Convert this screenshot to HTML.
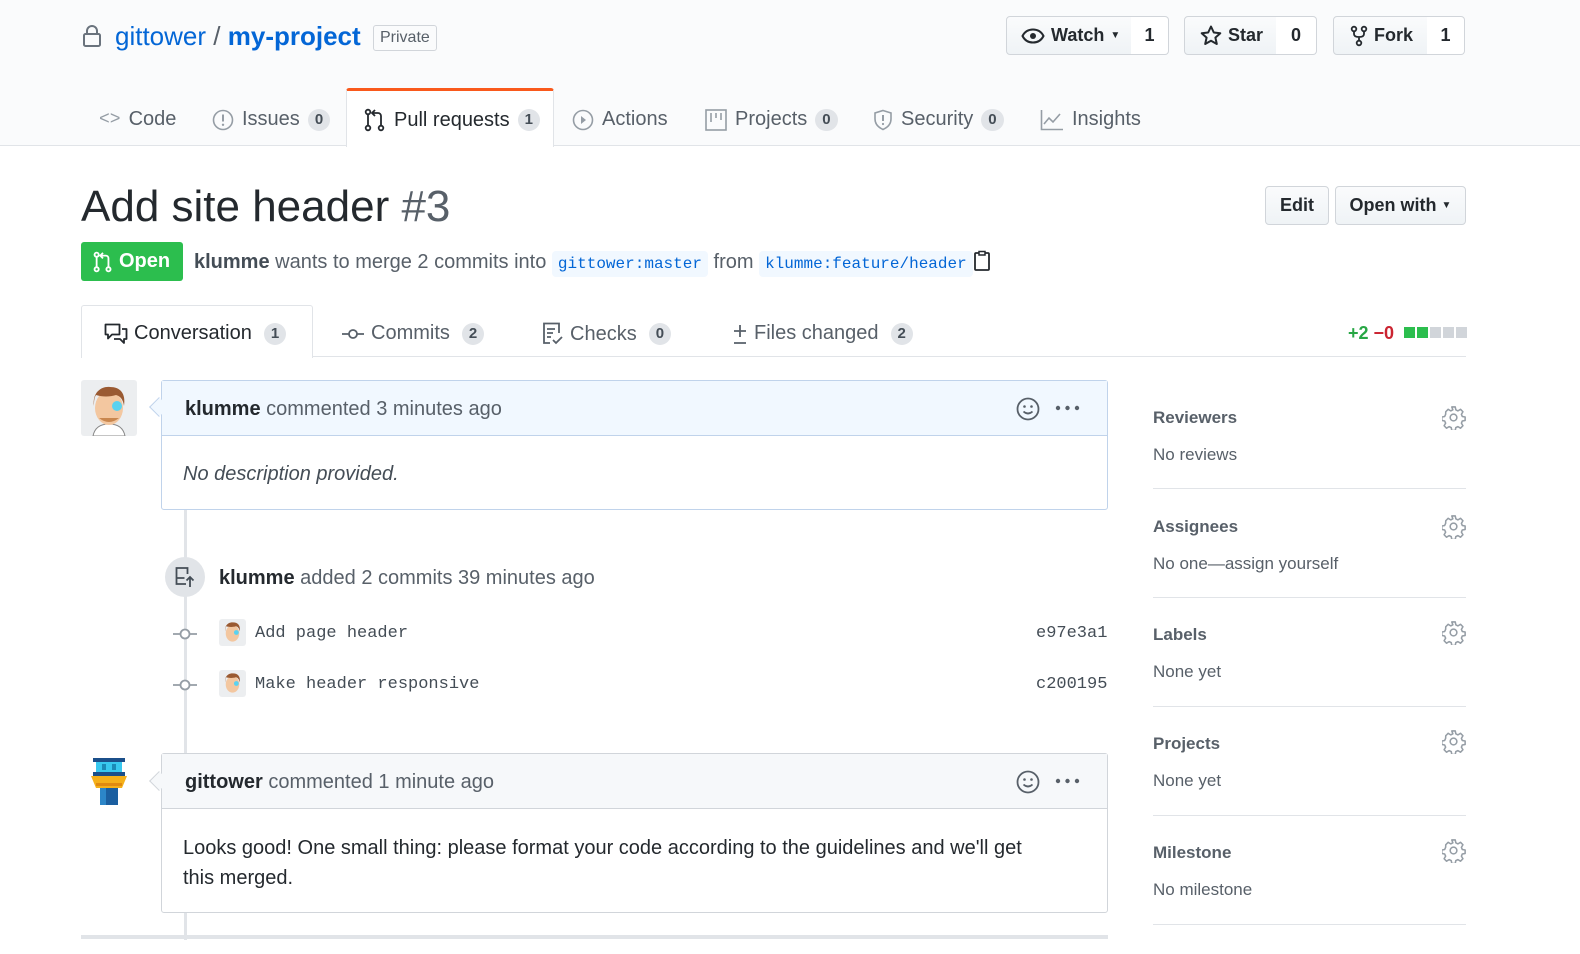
<!DOCTYPE html>
<html><head><meta charset="utf-8"><style>
*{box-sizing:border-box;margin:0;padding:0}
body{width:1580px;height:954px;overflow:hidden;background:#fff;font-family:"Liberation Sans",Helvetica,Arial,sans-serif;color:#24292e;position:relative}
.a{position:absolute;white-space:nowrap}
.hdr{position:absolute;left:0;top:0;width:1580px;height:146px;background:#fafbfc;border-bottom:1px solid #e1e4e8}
.btn{position:absolute;height:39px;border:1px solid #d1d5da;border-radius:4px;background:linear-gradient(#fafbfc,#eff3f6);font-weight:bold;font-size:18px;display:flex;align-items:center}
.cnt{position:absolute;height:39px;border:1px solid #d1d5da;border-left:none;border-radius:0 4px 4px 0;background:#fff;font-weight:bold;font-size:18px;display:flex;align-items:center;justify-content:center}
.tab{position:absolute;top:108px;font-size:20px;color:#586069;display:flex;align-items:center;gap:8px}
.badge{display:inline-block;background:#e1e4e8;border-radius:12px;font-size:15px;font-weight:bold;color:#444d56;padding:2px 7px;line-height:18px}
.code{font-family:"Liberation Mono",monospace;font-size:16px;color:#0366d6;background:#f1f8ff;padding:4px 6px;border-radius:4px}
.sh{font-size:17px;font-weight:bold;color:#586069}
.sv{font-size:17px;color:#586069}
.sep{position:absolute;left:1153px;width:313px;height:1px;background:#e1e4e8}
.mono{font-family:"Liberation Mono",monospace;font-size:17px;color:#444d56}
</style></head><body>
<div class="hdr"></div>
<svg class="a" style="left:82px;top:24px" width="20" height="24" viewBox="0 0 20 24"><rect x="2" y="10" width="16" height="12" rx="1.5" fill="none" stroke="#6a737d" stroke-width="2"/><path d="M5 10V7a5 5 0 0 1 10 0v3" fill="none" stroke="#6a737d" stroke-width="2"/></svg>
<div class="a" style="left:115px;top:21px;font-size:26px;color:#0366d6">gittower <span style="color:#586069">/</span> <b>my-project</b></div>
<div class="a" style="left:373px;top:25px;border:1px solid #d1d5da;border-radius:3px;font-size:16px;color:#586069;padding:3px 6px;background:#fafbfc">Private</div>
<div class="btn" style="left:1006px;top:16px;width:126px;border-radius:4px 0 0 4px;padding-left:14px;gap:6px"><svg width="24" height="16" viewBox="0 0 24 16"><path d="M1.5 8C4 3 8 1.5 12 1.5S20 3 22.5 8C20 13 16 14.5 12 14.5S4 13 1.5 8Z" fill="none" stroke="#24292e" stroke-width="2"/><circle cx="12" cy="8" r="3" fill="#24292e"/></svg>Watch <span style="font-size:10px">▼</span></div>
<div class="cnt" style="left:1131px;top:16px;width:38px">1</div>
<div class="btn" style="left:1184px;top:16px;width:93px;border-radius:4px 0 0 4px;padding-left:15px;gap:6px"><svg width="22" height="21" viewBox="0 0 22 21"><path d="M11 1.5l2.8 6 6.5.7-4.9 4.4 1.4 6.4L11 15.7 5.2 19l1.4-6.4L1.7 8.2l6.5-.7z" fill="none" stroke="#24292e" stroke-width="2" stroke-linejoin="round"/></svg>Star</div>
<div class="cnt" style="left:1276px;top:16px;width:41px">0</div>
<div class="btn" style="left:1333px;top:16px;width:95px;border-radius:4px 0 0 4px;padding-left:16px;gap:6px"><svg width="18" height="22" viewBox="0 0 18 22"><circle cx="4" cy="4" r="2.3" fill="none" stroke="#24292e" stroke-width="1.8"/><circle cx="14" cy="4" r="2.3" fill="none" stroke="#24292e" stroke-width="1.8"/><circle cx="9" cy="18" r="2.3" fill="none" stroke="#24292e" stroke-width="1.8"/><path d="M4 6.5v2.5c0 2 2 3 5 3s5-1 5-3V6.5M9 12v3.5" fill="none" stroke="#24292e" stroke-width="1.8"/></svg>Fork</div>
<div class="cnt" style="left:1427px;top:16px;width:38px">1</div>
<div class="a" style="left:346px;top:88px;width:208px;height:59px;background:#fff;border:1px solid #e1e4e8;border-bottom:none;border-top:3px solid #f9591c;border-radius:3px 3px 0 0"></div>
<div class="tab" style="left:99px"><span style="font-family:'Liberation Mono',monospace;color:#959da5;font-size:18px">&lt;&gt;</span>Code</div>
<div class="tab" style="left:212px"><svg width="22" height="22" viewBox="0 0 22 22"><circle cx="11" cy="11" r="9.5" fill="none" stroke="#959da5" stroke-width="1.6"/><path d="M11 5.5v7" stroke="#959da5" stroke-width="2"/><circle cx="11" cy="15.8" r="1.2" fill="#959da5"/></svg>Issues <span class="badge">0</span></div>
<div class="tab" style="left:364px;color:#24292e"><svg width="22" height="24" viewBox="0 0 22 24"><circle cx="4" cy="4" r="2.3" fill="none" stroke="#24292e" stroke-width="1.8"/><circle cx="4" cy="20" r="2.3" fill="none" stroke="#24292e" stroke-width="1.8"/><circle cx="17" cy="20" r="2.3" fill="none" stroke="#24292e" stroke-width="1.8"/><path d="M4 6.3v11.4M17 17.7V8a3 3 0 0 0-3-3H9M11 2 8 5l3 3" fill="none" stroke="#24292e" stroke-width="1.8"/></svg>Pull requests <span class="badge">1</span></div>
<div class="tab" style="left:572px"><svg width="22" height="22" viewBox="0 0 22 22"><circle cx="11" cy="11" r="9.5" fill="none" stroke="#959da5" stroke-width="1.6"/><path d="M9 7l5 4-5 4z" fill="#959da5"/></svg>Actions</div>
<div class="tab" style="left:705px"><svg width="22" height="22" viewBox="0 0 22 22"><rect x="1" y="1" width="20" height="20" fill="none" stroke="#959da5" stroke-width="1.6"/><path d="M6 4v9M11 4v5M16 4v7" stroke="#959da5" stroke-width="1.6"/></svg>Projects <span class="badge">0</span></div>
<div class="tab" style="left:873px"><svg width="20" height="22" viewBox="0 0 20 22"><path d="M10 1.5 18 4v6c0 5-3.5 8.5-8 10.5C5.5 18.5 2 15 2 10V4z" fill="none" stroke="#959da5" stroke-width="1.6"/><path d="M10 6v6" stroke="#959da5" stroke-width="2"/><circle cx="10" cy="15" r="1.1" fill="#959da5"/></svg>Security <span class="badge">0</span></div>
<div class="tab" style="left:1040px"><svg width="24" height="22" viewBox="0 0 24 22"><path d="M1.5 1v19.5H23M4 15l5-6 4 4 7-8" fill="none" stroke="#959da5" stroke-width="1.6"/></svg>Insights</div>
<div class="a" style="left:81px;top:182px;font-size:44px;color:#24292e">Add site header <span style="color:#586069">#3</span></div>
<div class="btn" style="left:1265px;top:186px;width:64px;justify-content:center">Edit</div>
<div class="btn" style="left:1335px;top:186px;width:131px;justify-content:center;gap:5px">Open with <span style="font-size:10px">▼</span></div>
<div class="a" style="left:81px;top:242px;width:102px;height:39px;background:#2cbe4e;border-radius:3px;color:#fff;font-weight:bold;font-size:20px;display:flex;align-items:center;gap:6px;padding-left:12px"><svg width="20" height="22" viewBox="0 0 22 24"><circle cx="4" cy="4" r="2.3" fill="none" stroke="#fff" stroke-width="2"/><circle cx="4" cy="20" r="2.3" fill="none" stroke="#fff" stroke-width="2"/><circle cx="17" cy="20" r="2.3" fill="none" stroke="#fff" stroke-width="2"/><path d="M4 6.3v11.4M17 17.7V8a3 3 0 0 0-3-3H9M11 2 8 5l3 3" fill="none" stroke="#fff" stroke-width="2"/></svg>Open</div>
<div class="a" style="left:194px;top:251px;font-size:20px;color:#586069"><b style="color:#444d56">klumme</b> wants to merge 2 commits into <span class="code">gittower:master</span> from <span class="code">klumme:feature/header</span></div>
<svg class="a" style="left:973px;top:250px" width="18" height="22" viewBox="0 0 18 22"><rect x="2" y="3" width="14" height="17" rx="1" fill="none" stroke="#24292e" stroke-width="1.8"/><rect x="6" y="1.5" width="6" height="3.5" fill="#fff" stroke="#24292e" stroke-width="1.5"/></svg>
<div class="a" style="left:81px;top:356px;width:1385px;height:1px;background:#e1e4e8"></div>
<div class="a" style="left:81px;top:305px;width:232px;height:53px;background:#fff;border:1px solid #e1e4e8;border-bottom:none;border-radius:3px 3px 0 0"></div>
<div class="a" style="left:104px;top:322px;font-size:20px;color:#24292e;display:flex;align-items:center;gap:6px"><svg width="24" height="22" viewBox="0 0 24 22"><path d="M1.5 1.5h14v10H8l-4 4v-4H1.5z" fill="none" stroke="#24292e" stroke-width="1.8" stroke-linejoin="round"/><path d="M18 6h4.5v10h-2.5v4l-4-4h-6" fill="none" stroke="#24292e" stroke-width="1.8" stroke-linejoin="round"/></svg>Conversation <span class="badge" style="margin-left:6px">1</span></div>
<div class="a" style="left:341px;top:322px;font-size:20px;color:#586069;display:flex;align-items:center;gap:6px"><svg width="24" height="14" viewBox="0 0 24 14"><circle cx="12" cy="7" r="4" fill="none" stroke="#586069" stroke-width="1.8"/><path d="M1 7h7M16 7h7" stroke="#586069" stroke-width="1.8"/></svg>Commits <span class="badge" style="margin-left:6px">2</span></div>
<div class="a" style="left:542px;top:322px;font-size:20px;color:#586069;display:flex;align-items:center;gap:6px"><svg width="22" height="24" viewBox="0 0 22 24"><path d="M8 21H2V1.5h15V11" fill="none" stroke="#586069" stroke-width="1.8"/><path d="M5 7h8M5 11h6M5 15h4M11 18l3 3 6-6" fill="none" stroke="#586069" stroke-width="1.8"/></svg>Checks <span class="badge" style="margin-left:6px">0</span></div>
<div class="a" style="left:732px;top:322px;font-size:20px;color:#586069;display:flex;align-items:center;gap:6px"><svg width="16" height="22" viewBox="0 0 16 22"><path d="M8 2v12M2 8h12M2 20h12" stroke="#586069" stroke-width="1.8"/></svg>Files changed <span class="badge" style="margin-left:6px">2</span></div>
<div class="a" style="left:1348px;top:323px;font-size:18px;font-weight:bold"><span style="color:#28a745">+2</span> <span style="color:#cb2431">−0</span></div>
<div class="a" style="left:1404px;top:327px;display:flex;gap:2px"><i style="width:11px;height:11px;background:#2cbe4e"></i><i style="width:11px;height:11px;background:#2cbe4e"></i><i style="width:11px;height:11px;background:#d1d5da"></i><i style="width:11px;height:11px;background:#d1d5da"></i><i style="width:11px;height:11px;background:#d1d5da"></i></div>
<div class="a" style="left:184px;top:509px;width:3px;height:431px;background:#e1e4e8"></div>
<div class="a" style="left:81px;top:380px;width:56px;height:56px;background:#eceef0;border-radius:3px;overflow:hidden"><svg width="56" height="56" viewBox="0 0 56 56"><path d="M12 56c2-10 10-12 16-12s14 2 16 12z" fill="#fff" stroke="#888"/><ellipse cx="28" cy="28" rx="14" ry="17" fill="#f3c7a0"/><path d="M13 26c-2-14 8-20 16-19 10 0 16 6 14 19-1-7-4-10-8-11-6 2-14 2-20 0-2 3-2 7-2 11z" fill="#9a5a32"/><circle cx="36" cy="26" r="5" fill="#5ad2f0"/><path d="M18 38q10 8 20 0" fill="#c9874f"/></svg></div>
<div class="a" style="left:161px;top:380px;width:947px;height:130px;border:1px solid #c0d3eb;border-radius:3px;background:#fff"></div>
<div class="a" style="left:162px;top:381px;width:945px;height:55px;background:#f1f8ff;border-bottom:1px solid #c0d3eb"></div>
<div class="a" style="left:152px;top:400px;width:14px;height:14px;background:#f1f8ff;border-left:1px solid #c0d3eb;border-bottom:1px solid #c0d3eb;transform:rotate(45deg)"></div>
<div class="a" style="left:185px;top:398px;font-size:20px;color:#586069"><b style="color:#24292e">klumme</b> commented 3 minutes ago</div>
<div class="a" style="left:183px;top:463px;font-size:20px;color:#444d56;font-style:italic">No description provided.</div>
<svg class="a" style="left:1016px;top:397px" width="24" height="24" viewBox="0 0 24 24"><circle cx="12" cy="12" r="10.5" fill="none" stroke="#586069" stroke-width="1.8"/><circle cx="8.5" cy="9.5" r="1.3" fill="#586069"/><circle cx="15.5" cy="9.5" r="1.3" fill="#586069"/><path d="M7.5 14.5q4.5 4 9 0" fill="none" stroke="#586069" stroke-width="1.8"/></svg>
<svg class="a" style="left:1055px;top:404px" width="26" height="8" viewBox="0 0 26 8"><circle cx="3" cy="4" r="2.2" fill="#586069"/><circle cx="12.5" cy="4" r="2.2" fill="#586069"/><circle cx="22" cy="4" r="2.2" fill="#586069"/></svg>
<div class="a" style="left:165px;top:557px;width:40px;height:40px;border-radius:50%;background:#e1e4e8"></div>
<svg class="a" style="left:174px;top:566px" width="22" height="22" viewBox="0 0 22 22"><path d="M12 18H2.5V2h11v6M2.5 12h8" fill="none" stroke="#444d56" stroke-width="1.8"/><path d="M16 21V11M12.5 14.5 16 11l3.5 3.5" fill="none" stroke="#444d56" stroke-width="1.8"/></svg>
<div class="a" style="left:219px;top:567px;font-size:20px;color:#586069"><b style="color:#24292e">klumme</b> added 2 commits 39 minutes ago</div>
<svg class="a" style="left:172px;top:626px" width="26" height="16" viewBox="0 0 26 16"><circle cx="13" cy="8" r="4.5" fill="#fff" stroke="#959da5" stroke-width="1.8"/><path d="M1 8h7.5M17.5 8H25" stroke="#959da5" stroke-width="1.8"/></svg>
<svg class="a" style="left:172px;top:677px" width="26" height="16" viewBox="0 0 26 16"><circle cx="13" cy="8" r="4.5" fill="#fff" stroke="#959da5" stroke-width="1.8"/><path d="M1 8h7.5M17.5 8H25" stroke="#959da5" stroke-width="1.8"/></svg>
<div class="a" style="left:219px;top:619px;width:27px;height:27px;background:#eceef0;border-radius:3px;overflow:hidden"><svg width="27" height="27" viewBox="0 0 56 56"><ellipse cx="28" cy="30" rx="14" ry="17" fill="#f3c7a0"/><path d="M13 26c-2-14 8-20 16-19 10 0 16 6 14 19-1-7-4-10-8-11-6 2-14 2-20 0-2 3-2 7-2 11z" fill="#9a5a32"/><circle cx="36" cy="28" r="5" fill="#5ad2f0"/></svg></div>
<div class="a" style="left:219px;top:670px;width:27px;height:27px;background:#eceef0;border-radius:3px;overflow:hidden"><svg width="27" height="27" viewBox="0 0 56 56"><ellipse cx="28" cy="30" rx="14" ry="17" fill="#f3c7a0"/><path d="M13 26c-2-14 8-20 16-19 10 0 16 6 14 19-1-7-4-10-8-11-6 2-14 2-20 0-2 3-2 7-2 11z" fill="#9a5a32"/><circle cx="36" cy="28" r="5" fill="#5ad2f0"/></svg></div>
<div class="a mono" style="left:255px;top:624px">Add page header</div>
<div class="a mono" style="left:255px;top:675px">Make header responsive</div>
<div class="a mono" style="left:1036px;top:624px">e97e3a1</div>
<div class="a mono" style="left:1036px;top:675px">c200195</div>
<svg class="a" style="left:90px;top:756px" width="38" height="50" viewBox="0 0 38 50"><rect x="3" y="2" width="32" height="4" fill="#1b4f8a"/><rect x="6" y="6" width="26" height="10" fill="#38c8f0"/><rect x="12" y="8" width="4" height="6" fill="#1b8ab8"/><rect x="22" y="8" width="4" height="6" fill="#1b8ab8"/><rect x="3" y="16" width="32" height="4" fill="#1b4f8a"/><path d="M1 20h36l-5 12H6z" fill="#f5b01a"/><rect x="6" y="27" width="26" height="3" fill="#e08a10"/><rect x="10" y="32" width="18" height="17" fill="#1b5fa0"/><rect x="10" y="32" width="6" height="17" fill="#2c86c8"/></svg>
<div class="a" style="left:161px;top:753px;width:947px;height:160px;border:1px solid #d1d5da;border-radius:3px;background:#fff"></div>
<div class="a" style="left:162px;top:754px;width:945px;height:55px;background:#f6f8fa;border-bottom:1px solid #d1d5da"></div>
<div class="a" style="left:152px;top:774px;width:14px;height:14px;background:#f6f8fa;border-left:1px solid #d1d5da;border-bottom:1px solid #d1d5da;transform:rotate(45deg)"></div>
<div class="a" style="left:185px;top:771px;font-size:20px;color:#586069"><b style="color:#24292e">gittower</b> commented 1 minute ago</div>
<svg class="a" style="left:1016px;top:770px" width="24" height="24" viewBox="0 0 24 24"><circle cx="12" cy="12" r="10.5" fill="none" stroke="#586069" stroke-width="1.8"/><circle cx="8.5" cy="9.5" r="1.3" fill="#586069"/><circle cx="15.5" cy="9.5" r="1.3" fill="#586069"/><path d="M7.5 14.5q4.5 4 9 0" fill="none" stroke="#586069" stroke-width="1.8"/></svg>
<svg class="a" style="left:1055px;top:777px" width="26" height="8" viewBox="0 0 26 8"><circle cx="3" cy="4" r="2.2" fill="#586069"/><circle cx="12.5" cy="4" r="2.2" fill="#586069"/><circle cx="22" cy="4" r="2.2" fill="#586069"/></svg>
<div class="a" style="left:183px;top:833px;width:850px;font-size:20px;line-height:30px;color:#24292e;white-space:normal">Looks good! One small thing: please format your code according to the guidelines and we'll get this merged.</div>
<div class="a" style="left:81px;top:935px;width:1027px;height:4px;background:#e1e4e8"></div>
<div class="a sh" style="left:1153px;top:408px">Reviewers</div><div class="a sv" style="left:1153px;top:445px">No reviews</div><div class="sep" style="top:488px"></div>
<div class="a sh" style="left:1153px;top:517px">Assignees</div><div class="a sv" style="left:1153px;top:554px">No one—assign yourself</div><div class="sep" style="top:597px"></div>
<div class="a sh" style="left:1153px;top:625px">Labels</div><div class="a sv" style="left:1153px;top:662px">None yet</div><div class="sep" style="top:706px"></div>
<div class="a sh" style="left:1153px;top:734px">Projects</div><div class="a sv" style="left:1153px;top:771px">None yet</div><div class="sep" style="top:815px"></div>
<div class="a sh" style="left:1153px;top:843px">Milestone</div><div class="a sv" style="left:1153px;top:880px">No milestone</div><div class="sep" style="top:924px"></div>
<svg width="0" height="0" style="position:absolute"><defs><g id="gear"><path d="M10.2 1.5h3.6l.6 3 2.2 1.1 2.7-1.6 2.5 2.5-1.6 2.7.9 2.2 3 .6v3.6l-3 .6-.9 2.2 1.6 2.7-2.5 2.5-2.7-1.6-2.2 1-.6 3h-3.6l-.6-3-2.2-1-2.7 1.6-2.5-2.5 1.6-2.7-1-2.2-3-.6v-3.6l3-.6 1-2.2L3.9 6.5l2.5-2.5 2.7 1.6 2.2-1.1z" fill="none" stroke="#959da5" stroke-width="1.6" stroke-linejoin="round"/><circle cx="12" cy="12.5" r="3.5" fill="none" stroke="#959da5" stroke-width="1.6"/></g></defs></svg>
<svg class="a" style="left:1442px;top:405px" width="24" height="25" viewBox="0 0 25 25"><use href="#gear"/></svg>
<svg class="a" style="left:1442px;top:514px" width="24" height="25" viewBox="0 0 25 25"><use href="#gear"/></svg>
<svg class="a" style="left:1442px;top:620px" width="24" height="25" viewBox="0 0 25 25"><use href="#gear"/></svg>
<svg class="a" style="left:1442px;top:729px" width="24" height="25" viewBox="0 0 25 25"><use href="#gear"/></svg>
<svg class="a" style="left:1442px;top:838px" width="24" height="25" viewBox="0 0 25 25"><use href="#gear"/></svg>
</body></html>
